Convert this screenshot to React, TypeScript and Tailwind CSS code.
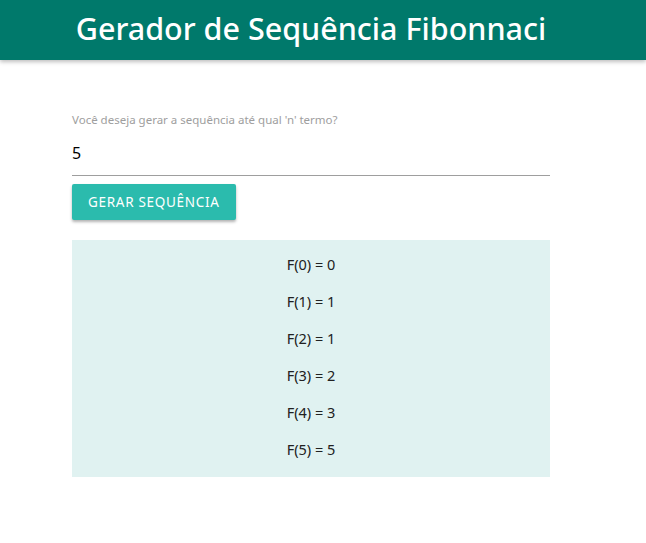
const termos = [0, 1, 1, 2, 3, 5];

export default function App() {
    return (
        <div className="min-h-screen bg-white" style={{ fontFamily: '"Noto Sans", "Open Sans", sans-serif' }}>
            {/* Cabeçalho */}
            <header className="h-[60px] bg-[#00796b] shadow-[0_2px_4px_rgba(0,0,0,0.25)] flex items-center justify-center pr-[24px]">
                <h1 className="text-[30.5px] font-medium leading-none text-white tracking-[0px] pb-1">
                    Gerador de Sequência Fibonnaci
                </h1>
            </header>

            <main className="w-[478px] ml-[72px] pt-[52px]">
                <label className="block text-[11.5px] text-[#9e9e9e] leading-4">
                    Você deseja gerar a sequência até qual 'n' termo?
                </label>
                <input
                    type="text"
                    defaultValue="5"
                    className="block w-full h-[40px] mt-[8px] pb-[6px] border-b border-[#9e9e9e] bg-transparent text-[16px] text-black outline-none"
                />

                <button
                    type="button"
                    className="mt-[8px] h-[36px] px-4 rounded-[2px] bg-[#2bbbad] text-white text-[13.5px] uppercase tracking-[0.7px] shadow-[0_2px_3px_rgba(0,0,0,0.3)]"
                >
                    Gerar Sequência
                </button>

                {/* Resultado */}
                <div className="mt-[20px] bg-[#e0f2f1] pt-[15px] flex flex-col items-center">
                    {termos.map((valor, i) => (
                        <p key={i} className="h-[37px] text-[14.5px] leading-[18px] text-[#212121]">
                            F({i}) = {valor}
                        </p>
                    ))}
                </div>
            </main>
        </div>
    );
}
